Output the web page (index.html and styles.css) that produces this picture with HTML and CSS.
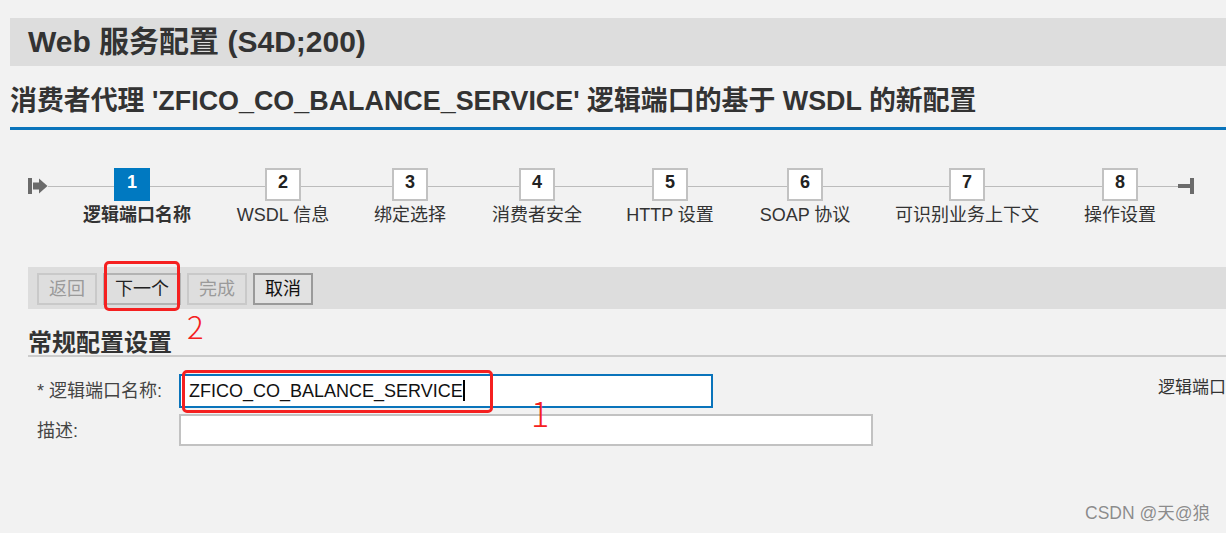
FILE: index.html
```html
<!DOCTYPE html>
<html lang="zh-CN">
<head>
<meta charset="utf-8">
<title>Web 服务配置</title>
<link rel="stylesheet" href="styles.css">
</head>
<body>
<div class="page">
  <div class="title-bar"><h1 class="title">Web 服务配置 (S4D;200)</h1></div>
  <h2 class="subtitle">消费者代理 'ZFICO_CO_BALANCE_SERVICE' 逻辑端口的基于 WSDL 的新配置</h2>

  <div class="stepper">
    <svg class="start-icon" width="20" height="16" viewBox="0 0 20 16"><rect x="0" y="0" width="4" height="16" fill="#6b6b6b"/><rect x="5" y="4.5" width="8" height="7" fill="#6b6b6b"/><polygon points="11,0.5 19.5,8 11,15.5" fill="#6b6b6b"/></svg>
    <div class="conn c0"></div>
    <div class="step active"><div class="num">1</div><div class="label">逻辑端口名称</div></div>
    <div class="conn c1"></div>
    <div class="step"><div class="num">2</div><div class="label">WSDL 信息</div></div>
    <div class="conn c2"></div>
    <div class="step"><div class="num">3</div><div class="label">绑定选择</div></div>
    <div class="conn c3"></div>
    <div class="step"><div class="num">4</div><div class="label">消费者安全</div></div>
    <div class="conn c4"></div>
    <div class="step"><div class="num">5</div><div class="label">HTTP 设置</div></div>
    <div class="conn c5"></div>
    <div class="step"><div class="num">6</div><div class="label">SOAP 协议</div></div>
    <div class="conn c6"></div>
    <div class="step"><div class="num">7</div><div class="label">可识别业务上下文</div></div>
    <div class="conn c7"></div>
    <div class="step"><div class="num">8</div><div class="label">操作设置</div></div>
    <div class="conn c8"></div>
    <svg class="end-icon" width="16" height="16" viewBox="0 0 16 16"><rect x="0" y="6" width="12" height="4" fill="#6b6b6b"/><rect x="12" y="0" width="4" height="16" fill="#6b6b6b"/></svg>
  </div>

  <div class="toolbar">
    <button class="btn disabled">返回</button>
    <div class="btn-wrap">
      <button class="btn">下一个</button>
      <span class="mark-box mark-next"></span>
      <span class="mark-num mark-2">2</span>
    </div>
    <button class="btn disabled">完成</button>
    <button class="btn strong">取消</button>
  </div>

  <h3 class="section">常规配置设置</h3>

  <div class="form">
    <div class="row">
      <label class="field-label">* 逻辑端口名称:</label>
      <div class="input-wrap">
        <div class="input focus">ZFICO_CO_BALANCE_SERVICE<span class="caret"></span></div>
        <span class="mark-box mark-input"></span>
        <span class="mark-num mark-1">1</span>
      </div>
      <div class="side-label">逻辑端口</div>
    </div>
    <div class="row">
      <label class="field-label">描述:</label>
      <div class="input wide"></div>
    </div>
  </div>

  <div class="watermark">CSDN @天@狼</div>
</div>
</body>
</html>
```

FILE: styles.css
```css
html, body {
  margin: 0;
  padding: 0;
  background: #f2f2f2;
  overflow: hidden;
}
body {
  font-family: "Liberation Sans", Arial, "Noto Sans CJK SC", sans-serif;
  color: #333;
  width: 1226px;
  height: 533px;
}
.page {
  position: relative;
  width: 1226px;
  height: 533px;
  overflow: hidden;
}
.title-bar {
  margin: 18px 0 0 10px;
  height: 48px;
  background: #dddddd;
  display: flex;
  align-items: center;
}
.title {
  margin: 0 0 0 18px;
  font-size: 30px;
  font-weight: bold;
  color: #333;
  line-height: 34px;
}
.subtitle {
  margin: 17px 0 0 10px;
  font-size: 26.9px;
  font-weight: bold;
  line-height: 36px;
  padding-bottom: 8px;
  border-bottom: 3px solid #0a74bb;
  color: #333;
  white-space: nowrap;
}

/* stepper */
.stepper {
  display: flex;
  align-items: flex-start;
  margin: 38px 0 0 28px;
}
.start-icon { margin-top: 10px; flex: none; }
.end-icon { margin-top: 10px; flex: none; }
.conn {
  height: 1px;
  background: #bcbcbc;
  margin-top: 18px;
  flex: none;
}
.c0 { width: 66px; }
.c1 { width: 115px; }
.c2 { width: 91px; }
.c3 { width: 91px; }
.c4 { width: 97px; }
.c5 { width: 99px; }
.c6 { width: 126px; }
.c7 { width: 117px; }
.c8 { width: 40px; }
.step {
  width: 36px;
  flex: none;
  display: flex;
  flex-direction: column;
  align-items: center;
}
.num {
  width: 36px;
  height: 33px;
  box-sizing: border-box;
  border: 2px solid #c2c2c2;
  background: #fff;
  font-size: 18px;
  font-weight: bold;
  color: #222;
  display: flex;
  align-items: center;
  justify-content: center;
  padding-bottom: 4px;
}
.step.active .num {
  background: #0079c1;
  border-color: #0079c1;
  color: #fff;
}
.label {
  margin-top: 2px;
  font-size: 18px;
  line-height: 24px;
  white-space: nowrap;
  color: #333;
}
.step.active .label {
  font-weight: bold;
  margin-left: 10px;
}

/* toolbar */
.toolbar {
  margin: 40px 0 0 28px;
  height: 42px;
  box-sizing: border-box;
  background: #dddddd;
  padding: 6px 9px;
  display: flex;
  gap: 6px;
  align-items: flex-start;
}
.btn-wrap {
  position: relative;
  display: flex;
}
.btn {
  height: 32px;
  box-sizing: border-box;
  border: 2px solid #b3b3b3;
  background: #dedede;
  font-family: "Liberation Sans", "Noto Sans CJK SC", sans-serif;
  font-size: 18px;
  color: #222;
  padding: 0 10px;
  line-height: 26px;
  margin: 0;
}
.btn.disabled {
  border-color: #c9c9c9;
  color: #9a9a9a;
}
.btn.strong {
  border-color: #9a9a9a;
  background: #e2e2e2;
  color: #111;
}

/* red annotations */
.mark-box {
  position: absolute;
  border: 3px solid #f52020;
  border-radius: 5px;
  box-sizing: border-box;
}
.mark-next {
  left: 1px;
  top: -12px;
  width: 76px;
  height: 50px;
}
.mark-num {
  position: absolute;
  color: #f52020;
  font-family: "Noto Sans CJK SC", "Liberation Sans", sans-serif;
  font-weight: 300;
  font-size: 31px;
  line-height: 31px;
}
.mark-2 {
  left: 84px;
  top: 37px;
}

.section {
  margin: 18px 0 0 28px;
  font-size: 24px;
  font-weight: bold;
  line-height: 28px;
  color: #333;
  border-bottom: 2px solid #cccccc;
  font-family: "Noto Sans CJK SC", sans-serif;
}

/* form */
.form {
  margin: 17px 0 0 37px;
  display: flex;
  flex-direction: column;
  gap: 6px;
}
.row {
  display: flex;
  align-items: flex-start;
}
.field-label {
  width: 142px;
  flex: none;
  font-size: 18px;
  line-height: 24px;
  color: #444;
  padding-top: 5px;
}
.input-wrap {
  position: relative;
}
.input {
  box-sizing: border-box;
  width: 534px;
  height: 34px;
  background: #fff;
  border: 2px solid #c2c2c2;
  font-size: 18px;
  line-height: 28px;
  padding: 1px 0 0 8px;
  color: #111;
  white-space: nowrap;
}
.input.focus {
  border-color: #0a74bb;
}
.input.wide {
  width: 694px;
  height: 32px;
}
.caret {
  display: inline-block;
  width: 2px;
  height: 21px;
  background: #000;
  vertical-align: -4px;
}
.mark-input {
  left: 3px;
  top: -4px;
  width: 311px;
  height: 43px;
}
.mark-1 {
  left: 352px;
  top: 22px;
  font-size: 34px;
  line-height: 34px;
}
.side-label {
  margin-left: auto;
  font-size: 17px;
  line-height: 24px;
  color: #333;
  white-space: nowrap;
  margin-right: 0;
  padding-top: 2px;
}

.watermark {
  position: absolute;
  right: 16px;
  bottom: 9px;
  font-size: 17.5px;
  color: #8c8c8c;
  text-shadow: 0 0 1px #ffffff;
}
```
